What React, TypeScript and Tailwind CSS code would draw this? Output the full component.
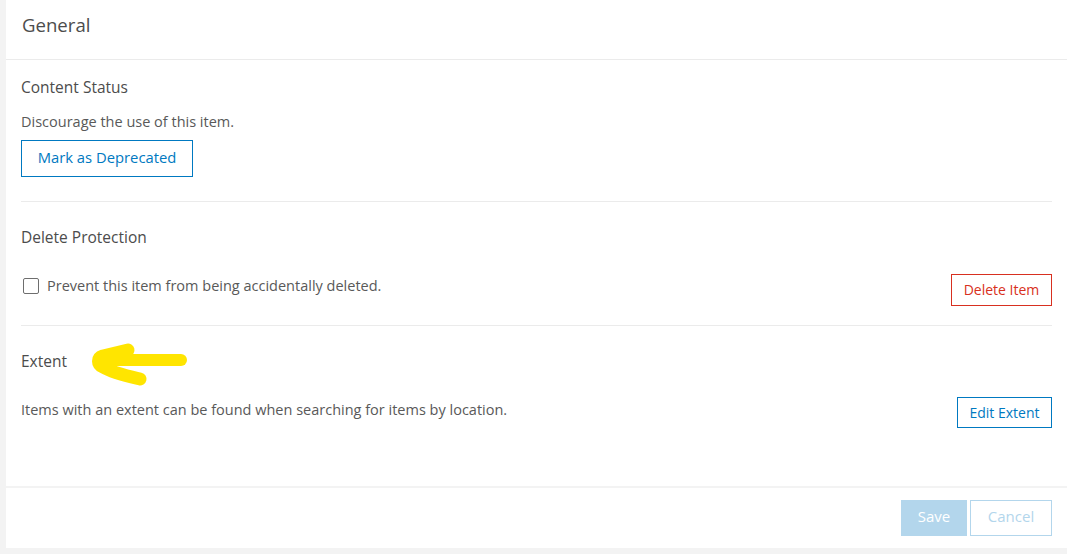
export default function App() {
  return (
    <div className="min-h-screen bg-[#f3f3f3] pl-[6px] font-['Open_Sans',sans-serif] text-[#4c4c4c]">
      <div className="bg-white">
        <div className="h-[60px] border-b border-[#ebebeb] px-4 pt-[12px]">
          <h2 className="text-[18.6px] leading-[26px]">General</h2>
        </div>

        <div className="px-[15px]">
          {/* Content Status */}
          <section className="border-b border-[#ebebeb] pt-[17px] pb-[24px]">
            <h3 className="text-[15.5px] leading-[20px]">Content Status</h3>
            <p className="mt-[15px] text-[14.5px] leading-[20px] text-[#595959]">Discourage the use of this item.</p>
            <button className="mt-[8px] h-[37px] w-[172px] border border-[#0079c1] pb-[3px] text-[14.8px] text-[#0079c1]">
              Mark as Deprecated
            </button>
          </section>

          {/* Delete Protection */}
          <section className="border-b border-[#ebebeb] pt-[25px] pb-[19px]">
            <h3 className="text-[15.5px] leading-[20px]">Delete Protection</h3>
            <div className="mt-[27px] flex items-start justify-between">
              <label className="mt-[2px] flex items-center gap-[8px] pl-[2px] text-[14.5px] leading-[20px] text-[#595959]">
                <span className="h-[16px] w-[16px] rounded-[2px] border border-[#6e6e6e] bg-white" />
                Prevent this item from being accidentally deleted.
              </label>
              <button className="h-[32px] w-[101px] border border-[#d83020] pb-[2px] text-[14px] text-[#d83020]">Delete Item</button>
            </div>
          </section>

          {/* Extent */}
          <section className="relative h-[160px] pt-[25px]">
            <h3 className="text-[15.5px] leading-[20px]">Extent</h3>
            <svg className="absolute left-[66px] top-[14px]" width="110" height="50" viewBox="0 0 110 50">
              <path d="M94 20 L28 20" fill="none" stroke="#ffe500" strokeWidth="12" strokeLinecap="round" />
              <path
                d="M41 10 L16 16 C10 18 10 24 16 27 C26 33 40 36 53 39"
                fill="none"
                stroke="#ffe500"
                strokeWidth="13"
                strokeLinecap="round"
                strokeLinejoin="round"
              />
              <path d="M14 18 L30 18 L30 26 L16 26 Z" fill="#ffe500" />
            </svg>
            <div className="mt-[26px] flex items-start justify-between">
              <p className="mt-[3px] text-[14.5px] leading-[20px] text-[#595959]">
                Items with an extent can be found when searching for items by location.
              </p>
              <button className="h-[31px] w-[95px] border border-[#0079c1] pb-[1px] text-[14px] text-[#0079c1]">Edit Extent</button>
            </div>
          </section>
        </div>
      </div>

      <div className="mt-[2px] flex h-[60px] items-center justify-end gap-[3px] bg-white pr-[15px]">
        <button className="h-[36px] w-[66px] bg-[#b3d6ec] pb-[3px] text-[15px] text-white">Save</button>
        <button className="h-[36px] w-[82px] border border-[#b3d6ec] pb-[3px] text-[15px] text-[#b3d6ec]">Cancel</button>
      </div>
    </div>
  );
}
